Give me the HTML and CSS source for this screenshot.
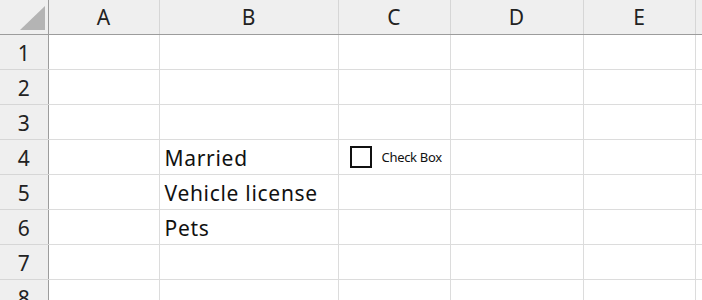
FILE: index.html
```html
<!DOCTYPE html>
<html lang="en">
<head>
    <meta charset="UTF-8">
    <title>Sheet</title>
    <link rel="stylesheet" href="styles.css">
</head>
<body>
    <table class="sheet">
        <colgroup>
            <col class="c-head">
            <col class="c-a">
            <col class="c-b">
            <col class="c-c">
            <col class="c-d">
            <col class="c-e">
            <col class="c-rest">
        </colgroup>
        <tr class="col-heads">
            <th class="corner"><span class="tri"></span></th>
            <th>A</th>
            <th>B</th>
            <th>C</th>
            <th>D</th>
            <th>E</th>
            <th></th>
        </tr>
        <tr><th class="rh">1</th><td></td><td></td><td></td><td></td><td></td><td></td></tr>
        <tr><th class="rh">2</th><td></td><td></td><td></td><td></td><td></td><td></td></tr>
        <tr><th class="rh">3</th><td></td><td></td><td></td><td></td><td></td><td></td></tr>
        <tr>
            <th class="rh">4</th><td></td><td class="txt">Married</td>
            <td class="ctl-cell">
                <label class="checkbox"><span class="box"></span>Check Box</label>
            </td>
            <td></td><td></td><td></td>
        </tr>
        <tr><th class="rh">5</th><td></td><td class="txt">Vehicle license</td><td></td><td></td><td></td><td></td></tr>
        <tr><th class="rh">6</th><td></td><td class="txt">Pets</td><td></td><td></td><td></td><td></td></tr>
        <tr><th class="rh">7</th><td></td><td></td><td></td><td></td><td></td><td></td></tr>
        <tr><th class="rh">8</th><td></td><td></td><td></td><td></td><td></td><td></td></tr>
    </table>
</body>
</html>
```

FILE: styles.css
```css
body {
    margin: 0;
    padding: 0;
    overflow: hidden;
    background: #fff;
    font-family: "Noto Sans", "Open Sans", sans-serif;
}

.sheet {
    border-collapse: collapse;
    table-layout: fixed;
    width: 702px;
}

.c-head { width: 48px; }
.c-a { width: 111px; }
.c-b { width: 179px; }
.c-c { width: 112px; }
.c-d { width: 133px; }
.c-e { width: 112px; }
.c-rest { width: 7px; }

tr {
    height: 35px;
}

.col-heads {
    height: 34px;
}

th {
    background: #efefef;
    font-weight: normal;
    font-size: 21px;
    color: #222;
    padding: 0;
    text-align: center;
    border: 1px solid #d6d6d6;
    border-top: none;
}

.col-heads th {
    border-bottom: 1px solid #9c9c9c;
}

.rh {
    border-left: none;
    border-right: 1px solid #9c9c9c;
    padding-top: 2px;
}

.corner {
    position: relative;
    border-left: none;
    border-right: 1px solid #9c9c9c;
}

.tri {
    position: absolute;
    right: 3px;
    bottom: 4px;
    width: 0;
    height: 0;
    border-left: 25px solid transparent;
    border-bottom: 24px solid #b4b4b4;
}

td {
    border: 1px solid #dcdcdc;
    padding: 0 0 0 5px;
    font-size: 21px;
    letter-spacing: 0.7px;
    color: #111;
    white-space: nowrap;
    overflow: hidden;
}

.txt {
    padding-top: 3px;
}

.ctl-cell {
    padding-left: 11px;
    overflow: visible;
}

.checkbox {
    display: flex;
    align-items: center;
    gap: 10px;
    font-size: 13px;
    letter-spacing: -0.3px;
    color: #111;
}

.box {
    flex: none;
    width: 18px;
    height: 18px;
    border: 2px solid #111;
}
```
